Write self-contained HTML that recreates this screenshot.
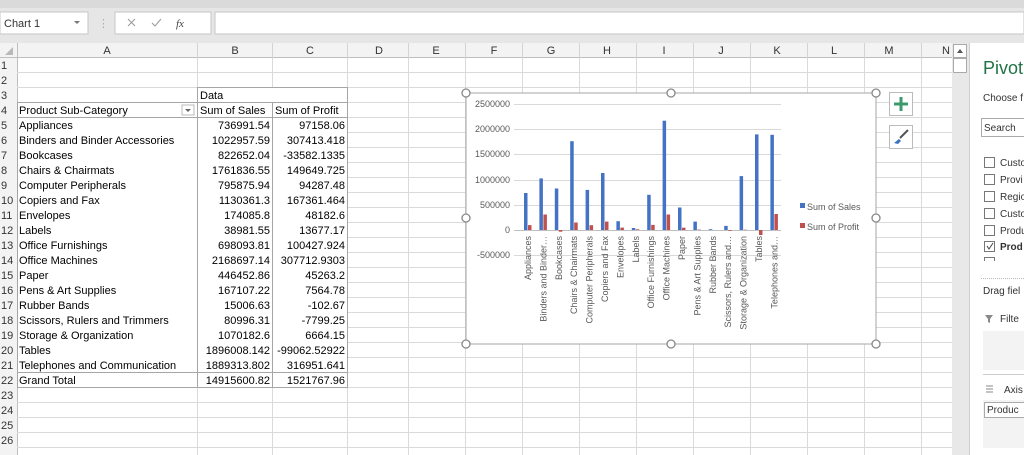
<!DOCTYPE html>
<html><head><meta charset="utf-8"><style>
html,body{margin:0;padding:0;width:1024px;height:455px;overflow:hidden;background:#fff}
svg{display:block;font-family:"Liberation Sans",Arial,sans-serif}
</style></head><body>
<svg width="1024" height="455" viewBox="0 0 1024 455" xmlns="http://www.w3.org/2000/svg">
<rect x="0" y="0" width="1024" height="43" fill="#e6e6e6"/>
<rect x="0" y="0" width="1024" height="8" fill="#dadada"/>
<rect x="0" y="12" width="88" height="22" fill="#fff" stroke="#c6c6c6"/>
<text x="4" y="27" font-size="11" fill="#333">Chart 1</text>
<path d="M74 21l3 3 3-3z" fill="#777"/>
<text x="98" y="27" font-size="11" fill="#aaa">⋮</text>
<rect x="115" y="12" width="96" height="22" fill="#fff" stroke="#c6c6c6"/>
<path d="M128 19l7 7M135 19l-7 7" stroke="#999" stroke-width="1"/>
<path d="M152 23l3 3 6-7" stroke="#999" fill="none"/>
<text x="176" y="27" font-size="11" font-style="italic" font-family="Liberation Serif,serif" fill="#444">fx</text>
<rect x="215" y="12" width="809" height="22" fill="#fff" stroke="#c6c6c6"/>
<rect x="0" y="43" width="952" height="15" fill="#f3f3f3"/>
<line x1="0" y1="57.5" x2="952" y2="57.5" stroke="#bfbfbf"/>
<rect x="0" y="58" width="17" height="397" fill="#f3f3f3"/>
<line x1="17.5" y1="43" x2="17.5" y2="455" stroke="#bfbfbf"/>
<path d="M5 55l8-8v8z" fill="#b8b8b8"/>
<g stroke="#d4d4d4">
<line x1="197.5" y1="43" x2="197.5" y2="58"/><line x1="272.5" y1="43" x2="272.5" y2="58"/><line x1="347.5" y1="43" x2="347.5" y2="58"/><line x1="408.5" y1="43" x2="408.5" y2="58"/><line x1="465.5" y1="43" x2="465.5" y2="58"/><line x1="522.5" y1="43" x2="522.5" y2="58"/><line x1="579.5" y1="43" x2="579.5" y2="58"/><line x1="636.5" y1="43" x2="636.5" y2="58"/><line x1="693.5" y1="43" x2="693.5" y2="58"/><line x1="750.5" y1="43" x2="750.5" y2="58"/><line x1="807.5" y1="43" x2="807.5" y2="58"/><line x1="864.5" y1="43" x2="864.5" y2="58"/><line x1="921.5" y1="43" x2="921.5" y2="58"/>
</g>
<g font-size="11" fill="#333" text-anchor="middle">
<text x="107" y="54">A</text><text x="235" y="54">B</text><text x="310" y="54">C</text><text x="379" y="54">D</text><text x="436" y="54">E</text><text x="494" y="54">F</text><text x="551" y="54">G</text><text x="607" y="54">H</text><text x="664" y="54">I</text><text x="721" y="54">J</text><text x="777" y="54">K</text><text x="834" y="54">L</text><text x="889" y="54">M</text><text x="946" y="54">N</text>
</g>
<g stroke="#dadada">
<line x1="17" y1="72.5" x2="952" y2="72.5"/><line x1="17" y1="87.5" x2="952" y2="87.5"/><line x1="347" y1="102.5" x2="952" y2="102.5"/>
<line x1="347" y1="117.5" x2="952" y2="117.5"/><line x1="347" y1="132.5" x2="952" y2="132.5"/><line x1="347" y1="147.5" x2="952" y2="147.5"/><line x1="347" y1="162.5" x2="952" y2="162.5"/><line x1="347" y1="177.5" x2="952" y2="177.5"/><line x1="347" y1="192.5" x2="952" y2="192.5"/><line x1="347" y1="207.5" x2="952" y2="207.5"/><line x1="347" y1="222.5" x2="952" y2="222.5"/><line x1="347" y1="237.5" x2="952" y2="237.5"/><line x1="347" y1="252.5" x2="952" y2="252.5"/><line x1="347" y1="267.5" x2="952" y2="267.5"/><line x1="347" y1="282.5" x2="952" y2="282.5"/><line x1="347" y1="297.5" x2="952" y2="297.5"/><line x1="347" y1="312.5" x2="952" y2="312.5"/><line x1="347" y1="327.5" x2="952" y2="327.5"/><line x1="347" y1="342.5" x2="952" y2="342.5"/><line x1="347" y1="357.5" x2="952" y2="357.5"/><line x1="347" y1="372.5" x2="952" y2="372.5"/>
<line x1="17" y1="387.5" x2="952" y2="387.5"/><line x1="17" y1="402.5" x2="952" y2="402.5"/><line x1="17" y1="417.5" x2="952" y2="417.5"/><line x1="17" y1="432.5" x2="952" y2="432.5"/><line x1="17" y1="447.5" x2="952" y2="447.5"/>
<line x1="197.5" y1="58" x2="197.5" y2="88"/><line x1="272.5" y1="58" x2="272.5" y2="88"/><line x1="197.5" y1="388" x2="197.5" y2="455"/><line x1="272.5" y1="388" x2="272.5" y2="455"/><line x1="347.5" y1="58" x2="347.5" y2="455"/>
<line x1="408.5" y1="58" x2="408.5" y2="455"/><line x1="465.5" y1="58" x2="465.5" y2="455"/><line x1="522.5" y1="58" x2="522.5" y2="455"/><line x1="579.5" y1="58" x2="579.5" y2="455"/><line x1="636.5" y1="58" x2="636.5" y2="455"/><line x1="693.5" y1="58" x2="693.5" y2="455"/><line x1="750.5" y1="58" x2="750.5" y2="455"/><line x1="807.5" y1="58" x2="807.5" y2="455"/><line x1="864.5" y1="58" x2="864.5" y2="455"/><line x1="921.5" y1="58" x2="921.5" y2="455"/>
</g>
<g stroke="#a6a6a6" fill="none">
<rect x="197.5" y="87.5" width="150" height="15"/>
<rect x="17.5" y="102.5" width="330" height="285"/>
<line x1="17" y1="117.5" x2="347" y2="117.5"/>
<line x1="17" y1="372.5" x2="347" y2="372.5"/>
<line x1="197.5" y1="102" x2="197.5" y2="388"/>
<line x1="272.5" y1="102" x2="272.5" y2="388"/>
</g>
<rect x="182" y="105" width="12" height="10" fill="#fff" stroke="#bbb"/>
<path d="M185 109l3 3 3-3z" fill="#666"/>
<g font-size="11" fill="#333">
<text x="1" y="69">1</text><text x="1" y="84">2</text><text x="1" y="99">3</text><text x="1" y="114">4</text><text x="1" y="129">5</text><text x="1" y="144">6</text><text x="1" y="159">7</text><text x="1" y="174">8</text><text x="1" y="189">9</text><text x="1" y="204">10</text><text x="1" y="219">11</text><text x="1" y="234">12</text><text x="1" y="249">13</text><text x="1" y="264">14</text><text x="1" y="279">15</text><text x="1" y="294">16</text><text x="1" y="309">17</text><text x="1" y="324">18</text><text x="1" y="339">19</text><text x="1" y="354">20</text><text x="1" y="369">21</text><text x="1" y="384">22</text><text x="1" y="399">23</text><text x="1" y="414">24</text><text x="1" y="429">25</text><text x="1" y="444">26</text>
</g>
<g font-size="11" fill="#000">
<text x="200" y="99">Data</text>
<text x="19" y="114">Product Sub-Category</text><text x="200" y="114">Sum of Sales</text><text x="275" y="114">Sum of Profit</text>
<text x="19" y="129">Appliances</text><text x="19" y="144">Binders and Binder Accessories</text><text x="19" y="159">Bookcases</text><text x="19" y="174">Chairs &amp; Chairmats</text><text x="19" y="189">Computer Peripherals</text><text x="19" y="204">Copiers and Fax</text><text x="19" y="219">Envelopes</text><text x="19" y="234">Labels</text><text x="19" y="249">Office Furnishings</text><text x="19" y="264">Office Machines</text><text x="19" y="279">Paper</text><text x="19" y="294">Pens &amp; Art Supplies</text><text x="19" y="309">Rubber Bands</text><text x="19" y="324">Scissors, Rulers and Trimmers</text><text x="19" y="339">Storage &amp; Organization</text><text x="19" y="354">Tables</text><text x="19" y="369">Telephones and Communication</text><text x="19" y="384">Grand Total</text>
</g>
<g font-size="11" fill="#000" text-anchor="end">
<text x="270" y="129">736991.54</text><text x="270" y="144">1022957.59</text><text x="270" y="159">822652.04</text><text x="270" y="174">1761836.55</text><text x="270" y="189">795875.94</text><text x="270" y="204">1130361.3</text><text x="270" y="219">174085.8</text><text x="270" y="234">38981.55</text><text x="270" y="249">698093.81</text><text x="270" y="264">2168697.14</text><text x="270" y="279">446452.86</text><text x="270" y="294">167107.22</text><text x="270" y="309">15006.63</text><text x="270" y="324">80996.31</text><text x="270" y="339">1070182.6</text><text x="270" y="354">1896008.142</text><text x="270" y="369">1889313.802</text><text x="270" y="384">14915600.82</text>
<text x="345" y="129">97158.06</text><text x="345" y="144">307413.418</text><text x="345" y="159">-33582.1335</text><text x="345" y="174">149649.725</text><text x="345" y="189">94287.48</text><text x="345" y="204">167361.464</text><text x="345" y="219">48182.6</text><text x="345" y="234">13677.17</text><text x="345" y="249">100427.924</text><text x="345" y="264">307712.9303</text><text x="345" y="279">45263.2</text><text x="345" y="294">7564.78</text><text x="345" y="309">-102.67</text><text x="345" y="324">-7799.25</text><text x="345" y="339">6664.15</text><text x="345" y="354">-99062.52922</text><text x="345" y="369">316951.641</text><text x="345" y="384">1521767.96</text>
</g>
<rect x="466" y="93" width="410" height="251" fill="#fff" stroke="#a6a6a6"/>
<g stroke="#d9d9d9">
<line x1="514" y1="104.5" x2="781" y2="104.5"/><line x1="514" y1="129.5" x2="781" y2="129.5"/><line x1="514" y1="154.5" x2="781" y2="154.5"/><line x1="514" y1="180.5" x2="781" y2="180.5"/><line x1="514" y1="205.5" x2="781" y2="205.5"/><line x1="514" y1="255.5" x2="781" y2="255.5"/>
</g>
<line x1="514" y1="230.5" x2="781" y2="230.5" stroke="#bfbfbf"/>
<g font-size="9" fill="#595959" text-anchor="end">
<text x="510" y="107">2500000</text><text x="510" y="132">2000000</text><text x="510" y="157">1500000</text><text x="510" y="183">1000000</text><text x="510" y="208">500000</text><text x="510" y="233">0</text><text x="510" y="258">-500000</text>
</g>
<g fill="#4472c4">
<rect x="524" y="193" width="3.5" height="37"/><rect x="539.4" y="178.4" width="3.5" height="51.6"/><rect x="554.8" y="188.5" width="3.5" height="41.5"/><rect x="570.2" y="141.2" width="3.5" height="88.8"/><rect x="585.6" y="189.9" width="3.5" height="40.1"/><rect x="601" y="173" width="3.5" height="57"/><rect x="616.4" y="221.2" width="3.5" height="8.8"/><rect x="631.8" y="228" width="3.5" height="2"/><rect x="647.2" y="194.8" width="3.5" height="35.2"/><rect x="662.6" y="120.7" width="3.5" height="109.3"/><rect x="678" y="207.5" width="3.5" height="22.5"/><rect x="693.4" y="221.6" width="3.5" height="8.4"/><rect x="708.8" y="229.2" width="3.5" height="0.8"/><rect x="724.2" y="225.9" width="3.5" height="4.1"/><rect x="739.6" y="176.1" width="3.5" height="53.9"/><rect x="755" y="134.4" width="3.5" height="95.6"/><rect x="770.4" y="134.8" width="3.5" height="95.2"/>
</g>
<g fill="#c0504d">
<rect x="528" y="225.1" width="3.5" height="4.9"/><rect x="543.4" y="214.5" width="3.5" height="15.5"/><rect x="558.8" y="230" width="3.5" height="1.7"/><rect x="574.2" y="222.5" width="3.5" height="7.5"/><rect x="589.6" y="225.2" width="3.5" height="4.8"/><rect x="605" y="221.6" width="3.5" height="8.4"/><rect x="620.4" y="227.6" width="3.5" height="2.4"/><rect x="635.8" y="229.3" width="3.5" height="0.7"/><rect x="651.2" y="224.9" width="3.5" height="5.1"/><rect x="666.6" y="214.5" width="3.5" height="15.5"/><rect x="682" y="227.7" width="3.5" height="2.3"/><rect x="697.4" y="229.6" width="3.5" height="0.4"/><rect x="728.2" y="230" width="3.5" height="0.8"/><rect x="743.6" y="229.7" width="3.5" height="0.3"/><rect x="759" y="230" width="3.5" height="5"/><rect x="774.4" y="214" width="3.5" height="16"/>
</g>
<g font-size="9" fill="#595959" text-anchor="end">
<text transform="translate(531,236) rotate(-90)">Appliances</text>
<text transform="translate(546.4,236) rotate(-90)">Binders and Binder…</text>
<text transform="translate(561.8,236) rotate(-90)">Bookcases</text>
<text transform="translate(577.2,236) rotate(-90)">Chairs &amp; Chairmats</text>
<text transform="translate(592.6,236) rotate(-90)">Computer Peripherals</text>
<text transform="translate(608,236) rotate(-90)">Copiers and Fax</text>
<text transform="translate(623.4,236) rotate(-90)">Envelopes</text>
<text transform="translate(638.8,236) rotate(-90)">Labels</text>
<text transform="translate(654.2,236) rotate(-90)">Office Furnishings</text>
<text transform="translate(669.6,236) rotate(-90)">Office Machines</text>
<text transform="translate(685,236) rotate(-90)">Paper</text>
<text transform="translate(700.4,236) rotate(-90)">Pens &amp; Art Supplies</text>
<text transform="translate(715.8,236) rotate(-90)">Rubber Bands</text>
<text transform="translate(731.2,236) rotate(-90)">Scissors, Rulers and…</text>
<text transform="translate(746.6,236) rotate(-90)">Storage &amp; Organization</text>
<text transform="translate(762,236) rotate(-90)">Tables</text>
<text transform="translate(777.4,236) rotate(-90)">Telephones and…</text>
</g>
<rect x="800" y="203" width="5" height="5" fill="#4472c4"/><text x="807" y="210" font-size="9" fill="#595959">Sum of Sales</text>
<rect x="800" y="223" width="5" height="5" fill="#c0504d"/><text x="807" y="230" font-size="9" fill="#595959">Sum of Profit</text>
<g fill="#fff" stroke="#888" stroke-width="1.3">
<circle cx="466" cy="93" r="4"/><circle cx="671" cy="93" r="4"/><circle cx="876" cy="93" r="4"/><circle cx="466" cy="218" r="4"/><circle cx="876" cy="218" r="4"/><circle cx="466" cy="344" r="4"/><circle cx="671" cy="344" r="4"/><circle cx="876" cy="344" r="4"/>
</g>
<rect x="889.5" y="92.5" width="23" height="23" fill="#fff" stroke="#bbb"/>
<path d="M901 97v14M894 104h14" stroke="#3c9a6c" stroke-width="3"/>
<rect x="889.5" y="125.5" width="23" height="23" fill="#fff" stroke="#bbb"/>
<path d="M894 143l5-4 2 2-3 3z" fill="#3b74c4"/><path d="M900 138l8-8" stroke="#555" stroke-width="2"/>
<rect x="952" y="43" width="17" height="412" fill="#e8e8e8"/>
<rect x="953.5" y="44.5" width="13" height="13" fill="#fff" stroke="#aaa"/>
<path d="M957 53l3-4 3 4z" fill="#555"/>
<rect x="953.5" y="58.5" width="13" height="14" fill="#fff" stroke="#aaa"/>
<rect x="969" y="43" width="55" height="412" fill="#fff"/>
<line x1="969.5" y1="43" x2="969.5" y2="455" stroke="#d0d0d0"/>
<text x="983" y="74" font-size="18" fill="#217346">Pivot</text>
<text x="983" y="101" font-size="10" fill="#333">Choose f</text>
<rect x="981.5" y="118.5" width="50" height="18" fill="#fff" stroke="#aaa"/>
<text x="984" y="131" font-size="10" fill="#333">Search</text>
<g fill="#fff" stroke="#777">
<rect x="984.5" y="157.5" width="10" height="10"/><rect x="984.5" y="174.5" width="10" height="10"/><rect x="984.5" y="191.5" width="10" height="10"/><rect x="984.5" y="208.5" width="10" height="10"/><rect x="984.5" y="225.5" width="10" height="10"/><rect x="984.5" y="241.5" width="10" height="10"/><rect x="984.5" y="257.5" width="10" height="10"/>
</g>
<path d="M987 246l2 3 4-6" stroke="#444" fill="none"/>
<rect x="980" y="261" width="44" height="8" fill="#fff"/>
<rect x="983" y="331" width="41" height="39" fill="#f3f3f3"/>
<rect x="983" y="400" width="41" height="48" fill="#f3f3f3"/>
<rect x="984.5" y="402.5" width="40" height="15" fill="#fff" stroke="#aaa"/>
<g font-size="10" fill="#333">
<text x="1000" y="166">Custo</text><text x="1000" y="183">Provi</text><text x="1000" y="200">Regio</text><text x="1000" y="217">Custo</text><text x="1000" y="234">Produ</text><text x="1000" y="250" font-weight="bold">Prod</text>
<text x="983" y="294">Drag fiel</text><text x="1000" y="322">Filte</text><text x="1004" y="393">Axis</text><text x="987" y="413">Produc</text>
</g>
<line x1="981" y1="278.5" x2="1024" y2="278.5" stroke="#bbb" stroke-dasharray="1,1"/>
<path d="M985 315h8l-3 4v4l-2-1v-3z" fill="#888"/>
<line x1="983" y1="374.5" x2="1024" y2="374.5" stroke="#ccc"/>
<path d="M986 386h7M986 389h7M986 392h7" stroke="#888"/>
</svg>
</body></html>
